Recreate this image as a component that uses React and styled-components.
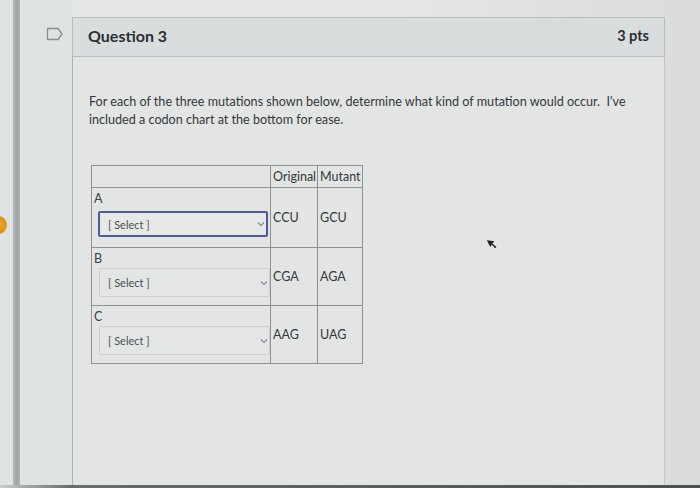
import React from "react";
import styled, { createGlobalStyle } from "styled-components";

const Global = createGlobalStyle`
  html, body { margin: 0; padding: 0; }
  body {
    width: 700px; height: 488px; overflow: hidden;
    background: #e2e5e4;
    font-family: Lato, "Open Sans", "Liberation Sans", sans-serif;
    color: #2f3436;
  }
`;

const Screen = styled.div`
  position: relative;
  width: 700px; height: 488px;
  display: flex; flex-direction: column;
  overflow: hidden;
  background: linear-gradient(90deg, #e3e6e5 0%, #e4e7e6 55%, #d9dcdb 100%);
`;

const Main = styled.div`
  flex: 1;
  display: flex;
  min-height: 0;
`;

const BottomEdge = styled.div`
  height: 3px;
  background: linear-gradient(90deg, #c9cccc 0%, #6a6d6e 10%, #4e5152 100%);
`;

const Rail = styled.div`
  width: 13px;
  background: #dfe2e2;
`;

const RailBar = styled.div`
  width: 7px;
  background: linear-gradient(90deg, #b7baba, #9fa2a3 60%, #b2b5b5);
`;

const Gutter = styled.div`
  width: 52px;
  padding-top: 27px;
  padding-left: 26px;
  box-sizing: border-box;
  background: #e0e3e3;
  svg { display: block; }
`;

const Card = styled.div`
  width: 593px;
  margin-top: 17px;
  display: flex;
  flex-direction: column;
`;

const CardHeader = styled.div`
  height: 35px;
  display: flex;
  align-items: center;
  justify-content: space-between;
  padding: 0 15px 3px 15px;
  box-sizing: content-box;
  background: #dadddd;
  border: 1px solid #b9bcbc;
`;

const Title = styled.div`
  font-size: 16px;
  font-weight: 700;
  color: #2a2f33;
`;

const Points = styled.div`
  font-size: 14.5px;
  font-weight: 700;
  color: #2a2f33;
`;

const CardBody = styled.div`
  flex: 1;
  background: #e2e5e4;
  border-left: 1px solid #aeb1b1;
  border-right: 1px solid #c4c7c7;
  padding: 36px 16px 0 16px;
`;

const Prompt = styled.p`
  margin: 0;
  font-size: 12.6px;
  line-height: 18px;
  color: #33383b;
`;

const Table = styled.table`
  margin-top: 36px;
  margin-left: 2px;
  border-collapse: collapse;
  table-layout: fixed;
  width: 271px;
  font-size: 12.5px;
  color: #33383b;
  td {
    border: 1px solid #8e9192;
    padding: 0 2px;
    overflow: visible;
    white-space: nowrap;
  }
`;

const HeadCell = styled.td`
  height: 21px;
  vertical-align: middle;
`;

const LabelCell = styled.td`
  vertical-align: top;
`;

const CodonCell = styled.td`
  vertical-align: middle;
`;

const Letter = styled.div`
  font-size: 12.5px;
  line-height: 14px;
  padding-top: 4px;
  color: #3a3f42;
`;

const Select = styled.div`
  margin: ${(p) => (p.$focused ? "5px 0 10px 4px" : "2px 0 8px 5px")};
  height: ${(p) => (p.$focused ? 22 : 27)}px;
  width: ${(p) => (p.$focused ? 157 : 160)}px;
  display: flex;
  align-items: center;
  justify-content: space-between;
  padding: 0 1px 0 8px;
  box-sizing: content-box;
  border: ${(p) => (p.$focused ? "2px solid #4d5d92" : "1px solid #cdd0d0")};
  border-radius: 2px;
  background: ${(p) => (p.$focused ? "#e6e9e8" : "#e3e6e5")};
  font-size: 11px;
  color: #4a4f52;
`;

const Chevron = () => (
  <svg width="8" height="6" viewBox="0 0 8 6">
    <path d="M1 1.5 L4 4.5 L7 1.5" fill="none" stroke="#7c8a9a" strokeWidth="1.2" />
  </svg>
);

const Bookmark = () => (
  <svg width="18" height="14" viewBox="0 0 18 14">
    <path d="M1.5 1.5 H12 L16 7 L12 12.5 H1.5 Z" fill="none" stroke="#8a8e90" strokeWidth="1.3" strokeLinejoin="round" />
  </svg>
);

const Dot = styled.div`
  position: absolute;
  left: -10px;
  top: 216px;
  width: 17px;
  height: 18px;
  border-radius: 50%;
  background: radial-gradient(circle at 60% 50%, #e9a52a, #c98412);
`;

const Cursor = styled.svg`
  position: absolute;
  left: 487px;
  top: 238px;
`;

const rows = [
  { l: "A", o: "CCU", m: "GCU", f: true },
  { l: "B", o: "CGA", m: "AGA" },
  { l: "C", o: "AAG", m: "UAG" },
];

export default function App() {
  return (
    <>
      <Global />
      <Screen>
        <Main>
          <Rail />
          <RailBar />
          <Gutter>
            <Bookmark />
          </Gutter>
          <Card>
            <CardHeader>
              <Title>Question 3</Title>
              <Points>3 pts</Points>
            </CardHeader>
            <CardBody>
              <Prompt>
                For each of the three mutations shown below, determine what kind of mutation would occur.&nbsp; I've
                <br />
                included a codon chart at the bottom for ease.
              </Prompt>
              <Table>
                <colgroup>
                  <col style={{ width: 179 }} />
                  <col style={{ width: 47 }} />
                  <col style={{ width: 45 }} />
                </colgroup>
                <tbody>
                  <tr>
                    <HeadCell></HeadCell>
                    <HeadCell>Original</HeadCell>
                    <HeadCell>Mutant</HeadCell>
                  </tr>
                  {rows.map((r) => (
                    <tr key={r.l}>
                      <LabelCell>
                        <Letter>{r.l}</Letter>
                        <Select $focused={r.f}>
                          <span>[ Select ]</span>
                          <Chevron />
                        </Select>
                      </LabelCell>
                      <CodonCell>{r.o}</CodonCell>
                      <CodonCell>{r.m}</CodonCell>
                    </tr>
                  ))}
                </tbody>
              </Table>
            </CardBody>
          </Card>
        </Main>
        <BottomEdge />
        <Dot />
        <Cursor width="10" height="12" viewBox="0 0 10 12">
          <path d="M1 1 L8 4 L5.5 5.5 L8.5 10 L7 11 L4.5 6.5 L2.5 8.5 Z" fill="#222" transform="rotate(-15 5 6)" />
        </Cursor>
      </Screen>
    </>
  );
}
